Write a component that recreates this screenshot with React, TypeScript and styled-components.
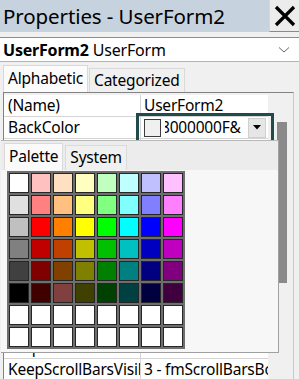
import { createGlobalStyle } from "styled-components";
import styled from "styled-components";

const GlobalStyle = createGlobalStyle`
  html, body {
    margin: 0;
    padding: 0;
    background: #f0f0f0;
  }
  * {
    box-sizing: border-box;
  }
`;

const PROPERTIES: [string, string][] = [
  ["(Name)", "UserForm2"],
  ["BackColor", ""],
  ["BorderColor", "&H80000012&"],
  ["BorderStyle", "0 - fmBorderStyleNone"],
  ["Caption", "UserForm2"],
  ["Cycle", "0 - fmCycleAllForms"],
  ["DrawBuffer", "32000"],
  ["Enabled", "True"],
  ["Font", "Tahoma"],
  ["ForeColor", "&H80000012&"],
  ["Height", "180"],
  ["HelpContextID", "0"],
  ["KeepScrollBarsVisible", "3 - fmScrollBarsBoth"],
];

const PALETTE = [
  ["#ffffff", "#ffc0c0", "#ffe0c0", "#ffffc0", "#c0ffc0", "#c0ffff", "#c0c0ff", "#ffc0ff"],
  ["#e0e0e0", "#ff8080", "#ffc080", "#ffff80", "#80ff80", "#80ffff", "#8080ff", "#ff80ff"],
  ["#c0c0c0", "#ff0000", "#ff8000", "#ffff00", "#00ff00", "#00ffff", "#0000ff", "#ff00ff"],
  ["#808080", "#c00000", "#c04000", "#c0c000", "#00c000", "#00c0c0", "#0000c0", "#c000c0"],
  ["#404040", "#800000", "#804000", "#808000", "#008000", "#008080", "#000080", "#800080"],
  ["#000000", "#400000", "#804040", "#404000", "#004000", "#004040", "#000040", "#400040"],
  ["#ffffff", "#ffffff", "#ffffff", "#ffffff", "#ffffff", "#ffffff", "#ffffff", "#ffffff"],
  ["#ffffff", "#ffffff", "#ffffff", "#ffffff", "#ffffff", "#ffffff", "#ffffff", "#ffffff"],
];

export default function App() {
  return (
    <>
      <GlobalStyle />
      <Window>
        <TitleBar>
          <Title>Properties - UserForm2</Title>
          <CloseButton>
            <svg width="22" height="22" viewBox="0 0 22 22">
              <path d="M2 2 L20 20 M20 2 L2 20" stroke="#000" strokeWidth="3.2" />
            </svg>
          </CloseButton>
        </TitleBar>

        <ObjectSelect>
          <span>
            <b>UserForm2</b> UserForm
          </span>
          <svg width="12" height="8" viewBox="0 0 12 8">
            <path d="M1 1.5 L6 6 L11 1.5" stroke="#666" strokeWidth="1" fill="none" />
          </svg>
        </ObjectSelect>

        <TabStrip>
          <Tab active>Alphabetic</Tab>
          <Tab>Categorized</Tab>
        </TabStrip>

        <GridFrame>
          <GridBody>
            <Rows>
              {PROPERTIES.map(([name, value]) => (
                <Row key={name}>
                  <NameCell>{name}</NameCell>
                  <ValueCell>
                    {name === "BackColor" ? (
                      <>
                        <Swatch />
                        <ScrolledText>
                          <span>8000000F&amp;</span>
                        </ScrolledText>
                        <DropButton>
                          <svg width="8" height="5" viewBox="0 0 8 5">
                            <path d="M0 0 H8 L4 4.5 Z" fill="#000" />
                          </svg>
                        </DropButton>
                      </>
                    ) : (
                      value
                    )}
                  </ValueCell>
                </Row>
              ))}
            </Rows>
            <ScrollTrack>
              <ScrollThumb />
            </ScrollTrack>
          </GridBody>

          <Highlight />

          <ColorPopup>
            <PopupTabs>
              <PopupTab active>Palette</PopupTab>
              <PopupTab>System</PopupTab>
            </PopupTabs>
            <PopupBody>
              <ColorGrid>
                {PALETTE.flat().map((c, i) => (
                  <ColorCell key={i} style={{ background: c }} />
                ))}
              </ColorGrid>
            </PopupBody>
          </ColorPopup>
        </GridFrame>
      </Window>
    </>
  );
}

const Window = styled.div`
  position: relative;
  width: 299px;
  height: 379px;
  overflow: hidden;
  background: #f0f0f0;
  font-family: "Noto Sans", "Open Sans", sans-serif;
  color: #000;
`;

const TitleBar = styled.div`
  display: flex;
  align-items: center;
  justify-content: space-between;
  height: 32px;
  background: #c6d2de;
`;

const Title = styled.div`
  padding-left: 3px;
  font-size: 20.5px;
  letter-spacing: -0.1px;
`;

const CloseButton = styled.div`
  display: flex;
  align-items: center;
  justify-content: center;
  width: 30px;
  height: 32px;
  background: #ececec;
  border-left: 1px solid #d6d6d6;
  border-bottom: 1px solid #8a8a8a;
`;

const ObjectSelect = styled.div`
  display: flex;
  align-items: center;
  justify-content: space-between;
  height: 25px;
  margin-top: 5px;
  padding: 0 9px 0 3px;
  background: #fff;
  border-top: 1px solid #8c8c8c;
  border-bottom: 1px solid #b4b4b4;
  font-size: 16px;
  letter-spacing: -0.2px;

  b {
    font-weight: 700;
  }
`;

const TabStrip = styled.div`
  display: flex;
  align-items: flex-end;
  height: 30px;
  padding-left: 3px;
`;

const Tab = styled.div<{ active?: boolean }>`
  height: ${(p) => (p.active ? "27px" : "24px")};
  margin-left: ${(p) => (p.active ? "0" : "1px")};
  padding: 1px 4px 0 4px;
  background: ${(p) => (p.active ? "#fbfbfb" : "#f0f0f0")};
  border: 1px solid #d9d9d9;
  border-bottom: none;
  font-size: 15.5px;
  letter-spacing: -0.2px;
  line-height: ${(p) => (p.active ? "23px" : "21px")};
`;

const GridFrame = styled.div`
  position: relative;
  margin-left: 3px;
  width: 291px;
  height: 287px;
  border-top: 1px solid #828282;
  border-left: 1px solid #828282;
  border-right: 1px solid #c8c8c8;
  background: #f0f0f0;
`;

const GridBody = styled.div`
  display: flex;
  padding-top: 2px;
`;

const Rows = styled.div`
  width: 264px;
  background: #fff;
`;

const Row = styled.div`
  display: flex;
  height: 22px;
  border-bottom: 1px solid #d4d4d4;
  font-size: 15.5px;
  letter-spacing: -0.2px;
  line-height: 21px;
`;

const NameCell = styled.div`
  width: 137px;
  padding-left: 4px;
  border-right: 1px solid #d4d4d4;
  white-space: nowrap;
  overflow: hidden;
`;

const ValueCell = styled.div`
  display: flex;
  align-items: center;
  flex: 1;
  min-width: 0;
  padding-left: 3px;
  white-space: nowrap;
  overflow: hidden;
`;

const Swatch = styled.div`
  flex: none;
  width: 17px;
  height: 18px;
  background: #f0f0f0;
  border: 1px solid #3c3c3c;
`;

const ScrolledText = styled.div`
  width: 82px;
  margin-left: 4px;
  overflow: hidden;

  span {
    display: inline-block;
    margin-left: -4px;
  }
`;

const DropButton = styled.div`
  display: flex;
  align-items: center;
  justify-content: center;
  flex: none;
  width: 18px;
  height: 20px;
  margin-left: 1px;
  background: #e6e6e6;
  border: 1px solid #cfcfcf;
`;

const ScrollTrack = styled.div`
  flex: 1;
  padding: 27px 0 0 9px;
`;

const ScrollThumb = styled.div`
  width: 10px;
  height: 161px;
  background: #8a8a8a;
`;

const Highlight = styled.div`
  position: absolute;
  left: 132px;
  top: 20px;
  width: 138px;
  height: 31px;
  border: 3px solid #1f4b4d;
  pointer-events: none;
`;

const ColorPopup = styled.div`
  position: absolute;
  left: -3px;
  top: 47px;
  width: 278px;
  height: 213px;
  display: flex;
  flex-direction: column;
  background: #f7f7f7;
  border: 1px solid #a0a0a0;
  border-left: none;
  border-top-color: #b8b8b8;
`;

const PopupTabs = styled.div`
  display: flex;
  align-items: flex-end;
  height: 29px;
  padding-left: 3px;
  background: #ececec;
`;

const PopupTab = styled.div<{ active?: boolean }>`
  height: ${(p) => (p.active ? "27px" : "25px")};
  margin-left: ${(p) => (p.active ? "0" : "2px")};
  padding: 0 4px;
  background: ${(p) => (p.active ? "#fafafa" : "#f0f0f0")};
  border: 1px solid #dadada;
  border-bottom: none;
  font-size: 15.5px;
  letter-spacing: -0.2px;
  line-height: ${(p) => (p.active ? "25px" : "23px")};
`;

const PopupBody = styled.div`
  flex: 1;
  padding: 1px 0 0 6px;
`;

const ColorGrid = styled.div`
  display: grid;
  grid-template-columns: repeat(8, 20px);
  grid-auto-rows: 20px;
  gap: 2px;
  width: 178px;
  padding: 2px;
  background: #6e6e6e;
`;

const ColorCell = styled.div`
  border: 1px solid #262626;
`;
